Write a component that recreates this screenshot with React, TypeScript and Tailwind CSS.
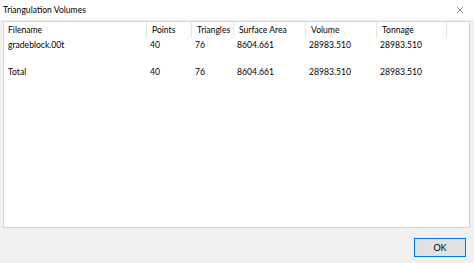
import { X } from "lucide-react"

const cols = [
  { label: "Filename", w: "w-[143px]" },
  { label: "Points", w: "w-[45px]" },
  { label: "Triangles", w: "w-[42px]" },
  { label: "Surface Area", w: "w-[72px]" },
  { label: "Volume", w: "w-[71px]" },
  { label: "Tonnage", w: "w-[70px]" },
]

const rows = [
  ["gradeblock.00t", "40", "76", "8604.661", "28983.510", "28983.510"],
  ["", "", "", "", "", ""],
  ["Total", "40", "76", "8604.661", "28983.510", "28983.510"],
]

export default function App() {
  return (
    <div
      className="w-[474px] h-[263px] bg-white flex flex-col text-[8.6px] leading-[12px] text-black overflow-hidden"
      style={{ fontFamily: '"Segoe UI", Lato, "Noto Sans", sans-serif' }}
    >
      {/* Title bar */}
      <div className="h-[20px] flex items-center justify-between pl-[3px] pr-[9px] shrink-0">
        <span className="whitespace-nowrap">Triangulation Volumes</span>
        <X className="w-[10px] h-[10px] text-[#222]" strokeWidth={1.3} />
      </div>

      {/* List */}
      <div className="flex-1 flex flex-col bg-[#f0f0f0] pt-[1px]">
        <div className="ml-[3px] w-[467px] h-[207px] bg-white border border-[#d4d4d4] shrink-0">
          <div className="flex h-[16px] items-center">
            {cols.map((c, i) => (
              <div
                key={c.label}
                className={`${c.w} shrink-0 h-full flex items-center whitespace-nowrap overflow-hidden border-r border-[#e5e5e5] ${i === 0 ? "pl-[4px]" : "pl-[5px]"}`}
              >
                {c.label}
              </div>
            ))}
          </div>
          {rows.map((r, ri) => (
            <div key={ri} className="flex h-[13.5px] items-center">
              {r.map((v, i) => (
                <div
                  key={i}
                  className={`${cols[i].w} shrink-0 whitespace-nowrap ${i === 0 ? "pl-[4px]" : "pl-[3px]"}`}
                >
                  {v}
                </div>
              ))}
            </div>
          ))}
        </div>

        {/* Footer */}
        <div className="flex-1 flex justify-end items-start pt-[10px] pr-[8px]">
          <button className="w-[52px] h-[19px] bg-[#e1e1e1] border border-[#0078d7] outline outline-1 -outline-offset-2 outline-[#cce4f7] text-[9px] leading-none flex items-center justify-center">
            OK
          </button>
        </div>
      </div>
    </div>
  )
}
